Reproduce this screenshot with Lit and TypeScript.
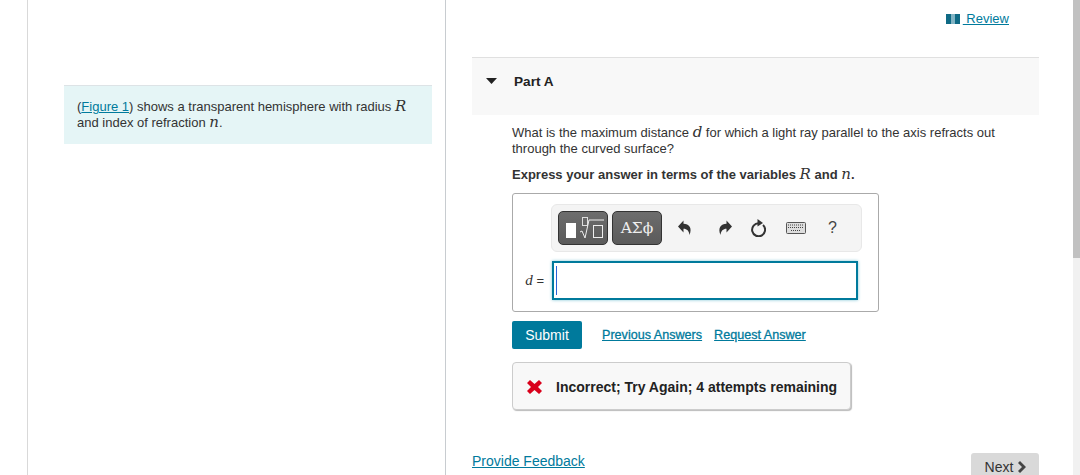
import { html, css, LitElement } from 'lit';
import { customElement } from 'lit/decorators.js';

@customElement('app-root')
export class AppRoot extends LitElement {
  static styles = css`
    :host {
      display: flex;
      height: 475px;
      overflow: hidden;
      background: #fff;
      font-family: 'Liberation Sans', Arial, sans-serif;
      font-size: 13px;
      line-height: 16px;
      color: #333;
    }
    a {
      color: #007a9c;
      text-decoration: underline;
    }
    .math {
      font-family: 'DejaVu Serif', serif;
      font-style: italic;
      font-weight: normal;
      font-size: 15px;
      line-height: 1;
    }
    .left {
      flex: none;
      box-sizing: border-box;
      width: 419px;
      height: 475px;
      margin-left: 27px;
      padding: 85px 13px 0 36px;
      border-left: 1px solid #d9d9d9;
      border-right: 1px solid #c8ccd0;
    }
    .intro {
      box-sizing: border-box;
      height: 59px;
      padding: 13px 13px 0;
      background: #e5f5f6;
      border-top: 1px solid #dde3e6;
    }
    .right {
      flex: none;
      box-sizing: border-box;
      width: 567px;
      height: 475px;
      margin-left: 26px;
      display: flex;
      flex-direction: column;
    }
    .review-row {
      flex: none;
      height: 57px;
      box-sizing: border-box;
      padding: 11px 30px 0 0;
      display: flex;
      justify-content: flex-end;
      align-items: flex-start;
    }
    .review {
      display: flex;
      align-items: center;
      gap: 3px;
    }
    .part {
      flex: none;
      box-sizing: border-box;
      height: 58px;
      display: flex;
      gap: 17px;
      padding: 16px 0 0 14px;
      background: #f8f8f8;
      border-top: 1px solid #e0e0e0;
      font-size: 13.6px;
      font-weight: bold;
      color: #222;
    }
    .part svg {
      margin-top: 4px;
    }
    .body {
      flex: none;
      padding: 10px 0 0 40px;
    }
    .body p {
      margin: 0;
    }
    .body .express {
      margin-top: 10px;
      font-weight: bold;
    }
    .answer {
      box-sizing: border-box;
      width: 367px;
      height: 119px;
      margin-top: 10px;
      padding: 10px 16px 0 0;
      border: 1px solid #aaa;
      border-radius: 3px;
      display: flex;
      flex-direction: column;
      align-items: flex-end;
      gap: 9px;
    }
    .toolbar {
      box-sizing: border-box;
      width: 311px;
      height: 48px;
      padding-left: 6px;
      display: flex;
      align-items: center;
      gap: 4px;
      background: #f4f4f4;
      border: 1px solid #e8e8e8;
      border-radius: 6px;
    }
    .tool {
      flex: none;
      box-sizing: border-box;
      width: 50px;
      height: 34px;
      display: flex;
      align-items: center;
      justify-content: center;
      background: linear-gradient(#6d6d6d, #5a5a5a);
      border: 1px solid #333;
      border-radius: 5px;
      color: #eee;
    }
    .tool.symbols {
      font-family: 'DejaVu Serif', serif;
      font-size: 15.5px;
    }
    .icons {
      display: flex;
      align-items: center;
      margin-left: 11px;
    }
    .icons .redo {
      margin-left: 24px;
    }
    .icons .reload {
      margin-left: 17px;
    }
    .icons .keys {
      margin-left: 20px;
    }
    .help {
      margin-left: 22px;
      font-size: 16px;
      color: #444;
    }
    .input-row {
      display: flex;
      align-items: center;
      gap: 8px;
      margin-right: 4px;
    }
    .label {
      font-size: 13px;
      color: #333;
    }
    .label i {
      font-family: 'Liberation Serif', serif;
      font-size: 15px;
    }
    .field {
      box-sizing: border-box;
      width: 306px;
      height: 39px;
      padding: 3px 2px;
      border: 2px solid #007a9c;
      box-shadow: 0 0 3px #7fc4d6;
      background: #fff;
    }
    .caret {
      width: 1px;
      height: 29px;
      background: #2a62d8;
    }
    .actions {
      display: flex;
      align-items: center;
      margin-top: 9px;
      font-size: 12.6px;
    }
    .actions a {
      -webkit-text-stroke: 0.3px #007a9c;
    }
    .submit {
      box-sizing: border-box;
      width: 70px;
      height: 28px;
      margin-right: 20px;
      display: flex;
      align-items: center;
      justify-content: center;
      background: #007a9c;
      border-radius: 2px;
      color: #fff;
      font-size: 14px;
    }
    .actions a + a {
      margin-left: 12px;
    }
    .feedback-msg {
      box-sizing: border-box;
      width: 339px;
      height: 48px;
      margin-top: 13px;
      padding: 1px 0 0 14px;
      display: flex;
      align-items: center;
      gap: 14px;
      background: #f8f8f8;
      border: 1px solid #ccc;
      border-radius: 4px;
      box-shadow: 1px 1px 1px #bbb;
      font-weight: bold;
      font-size: 14px;
      color: #222;
    }
    .bottom {
      display: flex;
      justify-content: space-between;
      align-items: flex-end;
      margin-top: auto;
    }
    .provide {
      font-size: 14px;
      margin-bottom: 6px;
    }
    .next {
      box-sizing: border-box;
      width: 68px;
      height: 22px;
      padding: 5px 0 0 2px;
      display: flex;
      align-items: center;
      justify-content: center;
      gap: 5px;
      background: #d9d9d9;
      border-radius: 3px 3px 0 0;
      color: #333;
      font-size: 14px;
    }
    .scroll {
      flex: none;
      width: 7px;
      margin-left: 34px;
      background: #f1f1f1;
    }
    .scroll div {
      height: 258px;
      background: #c1c1c1;
    }
  `;

  render() {
    return html`
      <div class="left">
        <div class="intro">
          (<a href="#">Figure 1</a>) shows a transparent hemisphere with radius
          <span class="math">R</span><br />
          and index of refraction <span class="math">n</span>.
        </div>
      </div>
      <div class="right">
        <div class="review-row">
          <a class="review" href="#">
            <svg width="14" height="10" viewBox="0 0 14 10">
              <path d="M0 0h6.500v10H0zM7.500 0H14v10H7.500z" fill="#0f6a85" />
              <path d="M5 0h1.500v10H5zM7.500 0H9v10H7.500z" fill="#7fb3c4" />
            </svg>
            <span>&nbsp;Review</span>
          </a>
        </div>
        <div class="part">
          <svg width="11" height="6" viewBox="0 0 11 6">
            <path d="M0 0h11L5.500 6z" fill="#222" />
          </svg>
          <span>Part A</span>
        </div>
        <div class="body">
          <p>
            What is the maximum distance <span class="math">d</span> for which a
            light ray parallel to the axis refracts out<br />through the curved
            surface?
          </p>
          <p class="express">
            Express your answer in terms of the variables
            <span class="math">R</span> and <span class="math">n</span>.
          </p>
          <div class="answer">
            <div class="toolbar">
              <div class="tool">
                <svg width="48" height="32" viewBox="0 0 48 32">
                  <rect x="7" y="11" width="10" height="15" fill="#fff" />
                  <rect x="23.500" y="5.500" width="5" height="8" fill="none" stroke="#ddd" />
                  <path d="M21 20l2-1 3 7 4-18h15" fill="none" stroke="#eee" />
                  <rect x="34.500" y="13.500" width="9" height="12" fill="none" stroke="#eee" />
                </svg>
              </div>
              <div class="tool symbols">ΑΣϕ</div>
              <div class="icons">
                <svg width="16" height="16" viewBox="0 0 16 16">
                  <path d="M1 6.500L6.500.5v3.300C12 3.800 15.500 8 12.500 15 12 11 10 8.800 6.500 8.800v3.700z" fill="#333" />
                </svg>
                <svg class="redo" width="16" height="16" viewBox="0 0 16 16">
                  <path d="M15 6.500L9.500.5v3.300C4 3.800.5 8 3.500 15 4 11 6 8.800 9.500 8.800v3.700z" fill="#333" />
                </svg>
                <svg class="reload" width="16" height="18" viewBox="0 0 16 18">
                  <path d="M9 4.300A6.500 6.500 0 1 0 13 6" fill="none" stroke="#333" stroke-width="2" />
                  <path d="M7.500 0l5.500 4-5.500 3.500z" fill="#333" />
                </svg>
                <svg class="keys" width="20" height="12" viewBox="0 0 20 12">
                  <rect x=".5" y=".5" width="19" height="11" rx="1" fill="#ddd" stroke="#555" />
                  <path d="M2 3h16M2 5.500h16M5 8.500h10" stroke="#444" stroke-dasharray="1 1" />
                </svg>
                <span class="help">?</span>
              </div>
            </div>
            <div class="input-row">
              <span class="label"><i>d</i> =</span>
              <div class="field"><div class="caret"></div></div>
            </div>
          </div>
          <div class="actions">
            <div class="submit">Submit</div>
            <a href="#">Previous Answers</a>
            <a href="#">Request Answer</a>
          </div>
          <div class="feedback-msg">
            <svg width="15" height="14" viewBox="0 0 15 14">
              <path d="M3 0l4.500 4L12 0l3 3-4 4 4 4-3 3-4.500-4L3 14l-3-3 4-4-4-4z" fill="#d9001b" />
            </svg>
            <span>Incorrect; Try Again; 4 attempts remaining</span>
          </div>
        </div>
        <div class="bottom">
          <a class="provide" href="#">Provide Feedback</a>
          <div class="next">
            Next
            <svg width="9" height="12" viewBox="0 0 9 12">
              <path d="M2 0l6 6-6 6-2-2 4-4-4-4z" fill="#444" />
            </svg>
          </div>
        </div>
      </div>
      <div class="scroll"><div></div></div>
    `;
  }
}

declare global {
  interface HTMLElementTagNameMap {
    'app-root': AppRoot;
  }
}
